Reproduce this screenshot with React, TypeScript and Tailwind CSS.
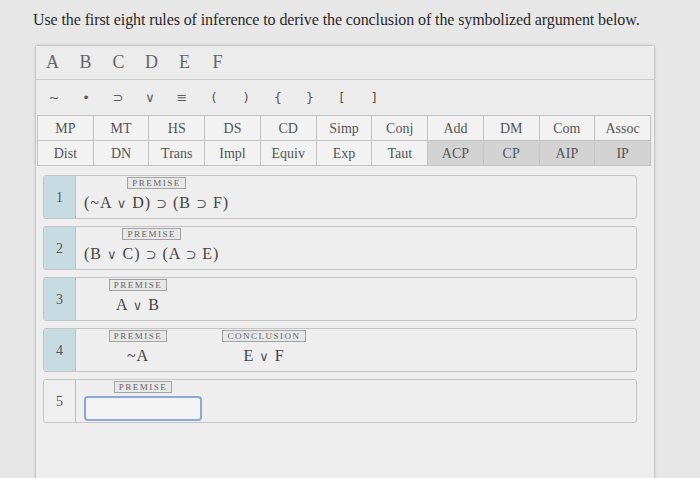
const serif = { fontFamily: '"Liberation Serif", "DejaVu Serif", serif' };

const letters = ["A", "B", "C", "D", "E", "F"];
const symbols = ["~", "•", "⊃", "∨", "≡", "(", ")", "{", "}", "[", "]"];

const rules = [
  ["MP", "MT", "HS", "DS", "CD", "Simp", "Conj", "Add", "DM", "Com", "Assoc"],
  ["Dist", "DN", "Trans", "Impl", "Equiv", "Exp", "Taut", "ACP", "CP", "AIP", "IP"],
];
const darkRules = ["ACP", "CP", "AIP", "IP"];

type Stmt = { label: string; text?: string; input?: boolean };
type Line = { n: number; given: boolean; items: Stmt[] };

const lines: Line[] = [
  { n: 1, given: true, items: [{ label: "Premise", text: "(~A ∨ D) ⊃ (B ⊃ F)" }] },
  { n: 2, given: true, items: [{ label: "Premise", text: "(B ∨ C) ⊃ (A ⊃ E)" }] },
  { n: 3, given: true, items: [{ label: "Premise", text: "A ∨ B" }] },
  {
    n: 4,
    given: true,
    items: [
      { label: "Premise", text: "~A" },
      { label: "Conclusion", text: "E ∨ F" },
    ],
  },
  { n: 5, given: false, items: [{ label: "Premise", input: true }] },
];

// connectives are drawn a bit smaller than the letters, like the original
function Formula({ text }: { text: string }) {
  return (
    <div className="text-[16px] leading-[28px] text-[#444] tracking-[1px] whitespace-pre">
      {text.split("").map((ch, i) =>
        ch === "∨" || ch === "⊃" ? (
          <span key={i} className="text-[13px] text-[#555]">
            {ch}
          </span>
        ) : (
          <span key={i}>{ch}</span>
        )
      )}
    </div>
  );
}

function Tag({ label }: { label: string }) {
  return (
    <span className="h-[12px] px-[4px] border border-[#a3a3a3] bg-[#e7e7e7] text-[9px] leading-[10px] uppercase tracking-[1.5px] text-[#666]">
      {label}
    </span>
  );
}

function ProofLine({ line }: { line: Line }) {
  return (
    <div className="flex h-[44px] rounded-[3px] border border-[#c4c4c4] bg-[#eeeeee] overflow-hidden">
      <div
        className={
          "w-[32px] shrink-0 flex items-center justify-center border-r border-[#bdbdbd] text-[14px] text-[#555] " +
          (line.given ? "bg-[#c6dce2]" : "bg-[#efefef]")
        }
      >
        {line.n}
      </div>
      <div className="flex gap-[18px] pl-[8px]">
        {line.items.map((s, i) => (
          <div key={i} className="flex flex-col items-center min-w-[108px] pt-[1px]">
            <Tag label={s.label} />
            {s.input ? (
              <div className="mt-[3px] w-[118px] h-[25px] rounded-[4px] border-2 border-[#8aa7d6] bg-[#f3f3f3]" />
            ) : (
              <Formula text={s.text ?? ""} />
            )}
          </div>
        ))}
      </div>
    </div>
  );
}

export default function App() {
  return (
    <div className="w-[700px] h-[478px] overflow-hidden bg-[#e7e7e7]" style={serif}>
      <div className="h-[45px] pl-[33px] pt-[8px] text-[16px] text-[#2a2a2a] tracking-[-0.1px]">
        Use the first eight rules of inference to derive the conclusion of the symbolized argument below.
      </div>

      <div className="ml-[35px] w-[620px] h-[460px] border border-[#c6c6c6] rounded-t-[3px] bg-[#eeeeee] shadow-[0_0_3px_rgba(0,0,0,0.12)]">
        {/* sentence letters */}
        <div className="flex h-[34px] items-center border-b border-[#c9c9c9] bg-[#ececec]">
          {letters.map((l) => (
            <span key={l} className="w-[33px] text-center text-[18px] text-[#666]">
              {l}
            </span>
          ))}
        </div>

        {/* connectives */}
        <div
          className="flex h-[35px] items-center pl-[2px] bg-[#ececec] text-[13px] text-[#5a5a5a]"
          style={{ fontFamily: '"DejaVu Sans", sans-serif' }}
        >
          {symbols.map((s) => (
            <span key={s} className="w-[32px] text-center">
              {s}
            </span>
          ))}
        </div>

        {/* rules */}
        <div className="ml-[1px] w-[614px] grid grid-cols-11 border-t border-l border-[#c2c2c2]">
          {rules.flat().map((r) => (
            <div
              key={r}
              className={
                "flex items-center justify-center h-[25px] border-r border-b border-[#c2c2c2] text-[14px] text-[#555] " +
                (darkRules.includes(r) ? "bg-[#d3d3d3]" : "bg-[#f2f2f2]")
              }
            >
              {r}
            </div>
          ))}
        </div>

        {/* proof */}
        <div className="flex flex-col gap-[7px] mt-[9px] ml-[7px] w-[594px]">
          {lines.map((l) => (
            <ProofLine key={l.n} line={l} />
          ))}
        </div>
      </div>
    </div>
  );
}
